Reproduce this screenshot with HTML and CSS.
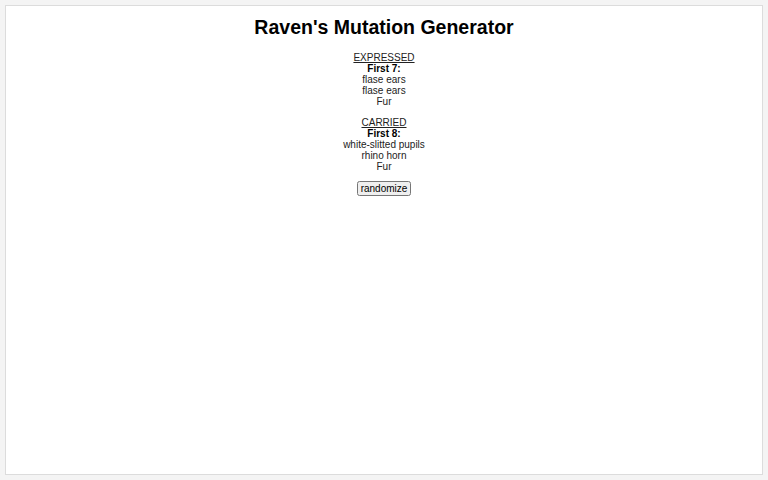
FILE: index.html
```html
<!DOCTYPE html>
<html lang="en">
<head>
    <meta charset="UTF-8">
    <title>Raven's Mutation Generator</title>
    <link rel="stylesheet" href="styles.css">
</head>
<body>
    <div class="container">
        <h1>Raven's Mutation Generator</h1>
        <div class="group" id="expressed">
            <div class="group-title">EXPRESSED</div>
            <div class="count">First 7:</div>
            <div>flase ears</div>
            <div>flase ears</div>
            <div>Fur</div>
        </div>
        <div class="group" id="carried">
            <div class="group-title">CARRIED</div>
            <div class="count">First 8:</div>
            <div>white-slitted pupils</div>
            <div>rhino horn</div>
            <div>Fur</div>
        </div>
        <button class="btn">randomize</button>
    </div>
</body>
</html>
```
FILE: styles.css
```css
html, body { height: 100%; }
body { margin: 0; padding: 5px; box-sizing: border-box; background: #f4f4f4; font-family: 'Liberation Sans', Arial, sans-serif; }
.container { height: 100%; box-sizing: border-box; background: #fff; border: 1px solid #dcdcdc; text-align: center; padding-top: 10px; font-size: 10px; color: #222; }
h1 { font-size: 19.5px; font-weight: 700; margin: 0 0 13px 0; color: #000; }
.group { line-height: 11px; margin-bottom: 10px; }
.group-title { text-decoration: underline; }
.count { font-weight: 700; color: #000; }
.btn { font-family: 'Liberation Sans', Arial, sans-serif; font-size: 10px; margin-top: -1px; padding: 0 2px; }
```
